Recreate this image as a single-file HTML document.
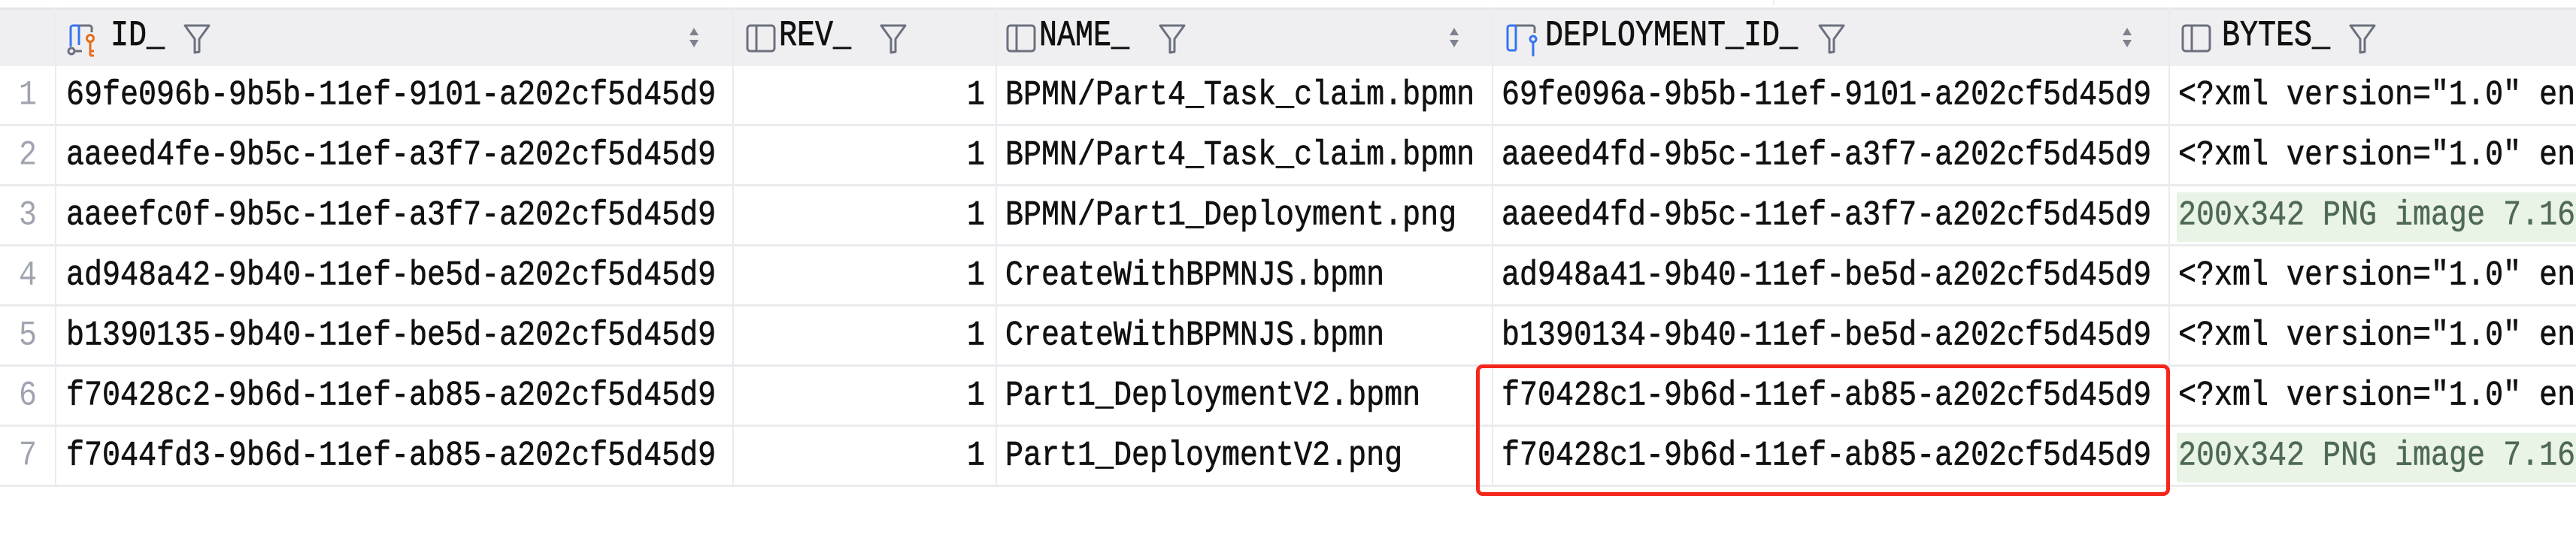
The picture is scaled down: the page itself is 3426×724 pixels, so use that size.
<!DOCTYPE html>
<html><head><meta charset="utf-8">
<style>
html,body{margin:0;padding:0;background:#fff;}
body{width:3426px;height:724px;position:relative;overflow:hidden;font-family:"Liberation Mono",monospace;font-size:40px;color:#111;}
.hdr{position:absolute;left:0;top:10px;width:3426px;height:78px;background:#efeff1;border-top:3px solid #e6e6e9;box-sizing:border-box;}
.row{position:absolute;left:0;width:3426px;height:80px;border-bottom:3px solid #ebebef;box-sizing:border-box;}
.vl{position:absolute;top:10px;height:638px;width:2px;background:#ebebef;}
.t{position:absolute;line-height:80px;white-space:nowrap;transform:scaleY(1.15);-webkit-text-stroke:0.6px #111;}
.h{position:absolute;line-height:78px;white-space:nowrap;top:10px;font-size:40px;transform:scaleY(1.2);-webkit-text-stroke:0.6px #111;}
.n{color:#a0a4b0;width:74px;text-align:center;left:0;-webkit-text-stroke:0;}
.png{position:absolute;left:2895px;width:531px;height:66px;background:#e9f3e6;}
.g{color:#4f6a52;-webkit-text-stroke:0.4px #4f6a52;}
svg{position:absolute;}
</style></head><body>
<div style="position:absolute;left:2358px;top:0;width:2px;height:7px;background:#ececef"></div>
<div class="hdr"></div>
<div class="row" style="top:88px"></div>
<div class="row" style="top:168px"></div>
<div class="row" style="top:248px"></div>
<div class="row" style="top:328px"></div>
<div class="row" style="top:408px"></div>
<div class="row" style="top:488px"></div>
<div class="row" style="top:568px"></div>
<div class="vl" style="left:73px"></div>
<div class="vl" style="left:974px"></div>
<div class="vl" style="left:1324px"></div>
<div class="vl" style="left:1984px"></div>
<div class="vl" style="left:2884px"></div>
<div class="png" style="top:256px"></div>
<div class="png" style="top:576px"></div>

<!-- ID icon -->
<svg style="left:88px;top:31px" width="48" height="46" viewBox="0 0 48 46" fill="none">
<path d="M17 3H9a3 3 0 0 0-3 3v25" stroke="#3574f0" stroke-width="3"/>
<path d="M17 3v26" stroke="#3574f0" stroke-width="3"/>
<path d="M17 3h14a3 3 0 0 1 3 3v6" stroke="#6c707e" stroke-width="3"/>
<circle cx="7" cy="37" r="4" stroke="#6c707e" stroke-width="3"/><path d="M11 37h10" stroke="#6c707e" stroke-width="3"/>
<circle cx="32" cy="20" r="4.5" stroke="#e66d17" stroke-width="3"/><path d="M32 25v18M32 37h5M32 43h5" stroke="#e66d17" stroke-width="3"/>
</svg>
<div class="h" style="left:147px">ID_</div>
<svg style="left:244px;top:32px" width="36" height="40" viewBox="0 0 36 40" fill="none"><path d="M2 2h32L21 20v17l-6 1V20z" stroke="#6c707e" stroke-width="3" stroke-linejoin="round"/></svg>
<svg style="left:916px;top:36px" width="14" height="28" viewBox="0 0 14 28"><path d="M7 1L13 11H1z M1 17h12L7 27z" fill="#7e828e"/></svg>

<svg style="left:992px;top:32px" width="40" height="38" viewBox="0 0 40 38" fill="none"><rect x="2" y="2" width="36" height="34" rx="4" stroke="#6c707e" stroke-width="3"/><path d="M14 2v34" stroke="#6c707e" stroke-width="3"/></svg>
<div class="h" style="left:1036px">REV_</div>
<svg style="left:1170px;top:32px" width="36" height="40" viewBox="0 0 36 40" fill="none"><path d="M2 2h32L21 20v17l-6 1V20z" stroke="#6c707e" stroke-width="3" stroke-linejoin="round"/></svg>

<svg style="left:1338px;top:32px" width="40" height="38" viewBox="0 0 40 38" fill="none"><rect x="2" y="2" width="36" height="34" rx="4" stroke="#6c707e" stroke-width="3"/><path d="M14 2v34" stroke="#6c707e" stroke-width="3"/></svg>
<div class="h" style="left:1382px">NAME_</div>
<svg style="left:1541px;top:32px" width="36" height="40" viewBox="0 0 36 40" fill="none"><path d="M2 2h32L21 20v17l-6 1V20z" stroke="#6c707e" stroke-width="3" stroke-linejoin="round"/></svg>
<svg style="left:1927px;top:36px" width="14" height="28" viewBox="0 0 14 28"><path d="M7 1L13 11H1z M1 17h12L7 27z" fill="#7e828e"/></svg>

<!-- DEPLOYMENT icon -->
<svg style="left:2001px;top:31px" width="46" height="46" viewBox="0 0 46 46" fill="none">
<path d="M15 36H7a3 3 0 0 1-3-3V6a3 3 0 0 1 3-3h8" stroke="#3574f0" stroke-width="3"/>
<path d="M15 3v33" stroke="#3574f0" stroke-width="3"/>
<path d="M15 3h22a3 3 0 0 1 3 3v7" stroke="#6c707e" stroke-width="3"/>
<circle cx="38" cy="21" r="4" stroke="#3574f0" stroke-width="3"/><path d="M38 26v18" stroke="#3574f0" stroke-width="3"/>
</svg>
<div class="h" style="left:2055px">DEPLOYMENT_ID_</div>
<svg style="left:2418px;top:32px" width="36" height="40" viewBox="0 0 36 40" fill="none"><path d="M2 2h32L21 20v17l-6 1V20z" stroke="#6c707e" stroke-width="3" stroke-linejoin="round"/></svg>
<svg style="left:2822px;top:36px" width="14" height="28" viewBox="0 0 14 28"><path d="M7 1L13 11H1z M1 17h12L7 27z" fill="#7e828e"/></svg>

<svg style="left:2901px;top:32px" width="40" height="38" viewBox="0 0 40 38" fill="none"><rect x="2" y="2" width="36" height="34" rx="4" stroke="#6c707e" stroke-width="3"/><path d="M14 2v34" stroke="#6c707e" stroke-width="3"/></svg>
<div class="h" style="left:2955px">BYTES_</div>
<svg style="left:3124px;top:32px" width="36" height="40" viewBox="0 0 36 40" fill="none"><path d="M2 2h32L21 20v17l-6 1V20z" stroke="#6c707e" stroke-width="3" stroke-linejoin="round"/></svg>

<!-- rows -->
<div class="t n" style="top:88px">1</div><div class="t" style="top:88px;left:88px">69fe096b-9b5b-11ef-9101-a202cf5d45d9</div><div class="t" style="top:88px;left:1286px">1</div><div class="t" style="top:88px;left:1337px">BPMN/Part4_Task_claim.bpmn</div><div class="t" style="top:88px;left:1997px">69fe096a-9b5b-11ef-9101-a202cf5d45d9</div><div class="t" style="top:88px;left:2897px">&lt;?xml version="1.0" encoding</div>
<div class="t n" style="top:168px">2</div><div class="t" style="top:168px;left:88px">aaeed4fe-9b5c-11ef-a3f7-a202cf5d45d9</div><div class="t" style="top:168px;left:1286px">1</div><div class="t" style="top:168px;left:1337px">BPMN/Part4_Task_claim.bpmn</div><div class="t" style="top:168px;left:1997px">aaeed4fd-9b5c-11ef-a3f7-a202cf5d45d9</div><div class="t" style="top:168px;left:2897px">&lt;?xml version="1.0" encoding</div>
<div class="t n" style="top:248px">3</div><div class="t" style="top:248px;left:88px">aaeefc0f-9b5c-11ef-a3f7-a202cf5d45d9</div><div class="t" style="top:248px;left:1286px">1</div><div class="t" style="top:248px;left:1337px">BPMN/Part1_Deployment.png</div><div class="t" style="top:248px;left:1997px">aaeed4fd-9b5c-11ef-a3f7-a202cf5d45d9</div><div class="t g" style="top:248px;left:2897px">200x342 PNG image 7.16 KB</div>
<div class="t n" style="top:328px">4</div><div class="t" style="top:328px;left:88px">ad948a42-9b40-11ef-be5d-a202cf5d45d9</div><div class="t" style="top:328px;left:1286px">1</div><div class="t" style="top:328px;left:1337px">CreateWithBPMNJS.bpmn</div><div class="t" style="top:328px;left:1997px">ad948a41-9b40-11ef-be5d-a202cf5d45d9</div><div class="t" style="top:328px;left:2897px">&lt;?xml version="1.0" encoding</div>
<div class="t n" style="top:408px">5</div><div class="t" style="top:408px;left:88px">b1390135-9b40-11ef-be5d-a202cf5d45d9</div><div class="t" style="top:408px;left:1286px">1</div><div class="t" style="top:408px;left:1337px">CreateWithBPMNJS.bpmn</div><div class="t" style="top:408px;left:1997px">b1390134-9b40-11ef-be5d-a202cf5d45d9</div><div class="t" style="top:408px;left:2897px">&lt;?xml version="1.0" encoding</div>
<div class="t n" style="top:488px">6</div><div class="t" style="top:488px;left:88px">f70428c2-9b6d-11ef-ab85-a202cf5d45d9</div><div class="t" style="top:488px;left:1286px">1</div><div class="t" style="top:488px;left:1337px">Part1_DeploymentV2.bpmn</div><div class="t" style="top:488px;left:1997px">f70428c1-9b6d-11ef-ab85-a202cf5d45d9</div><div class="t" style="top:488px;left:2897px">&lt;?xml version="1.0" encoding</div>
<div class="t n" style="top:568px">7</div><div class="t" style="top:568px;left:88px">f7044fd3-9b6d-11ef-ab85-a202cf5d45d9</div><div class="t" style="top:568px;left:1286px">1</div><div class="t" style="top:568px;left:1337px">Part1_DeploymentV2.png</div><div class="t" style="top:568px;left:1997px">f70428c1-9b6d-11ef-ab85-a202cf5d45d9</div><div class="t g" style="top:568px;left:2897px">200x342 PNG image 7.16 KB</div>

<div style="position:absolute;left:1963px;top:485px;width:923px;height:175px;border:5px solid #f5261b;border-radius:9px;box-sizing:border-box;"></div>
</body></html>
